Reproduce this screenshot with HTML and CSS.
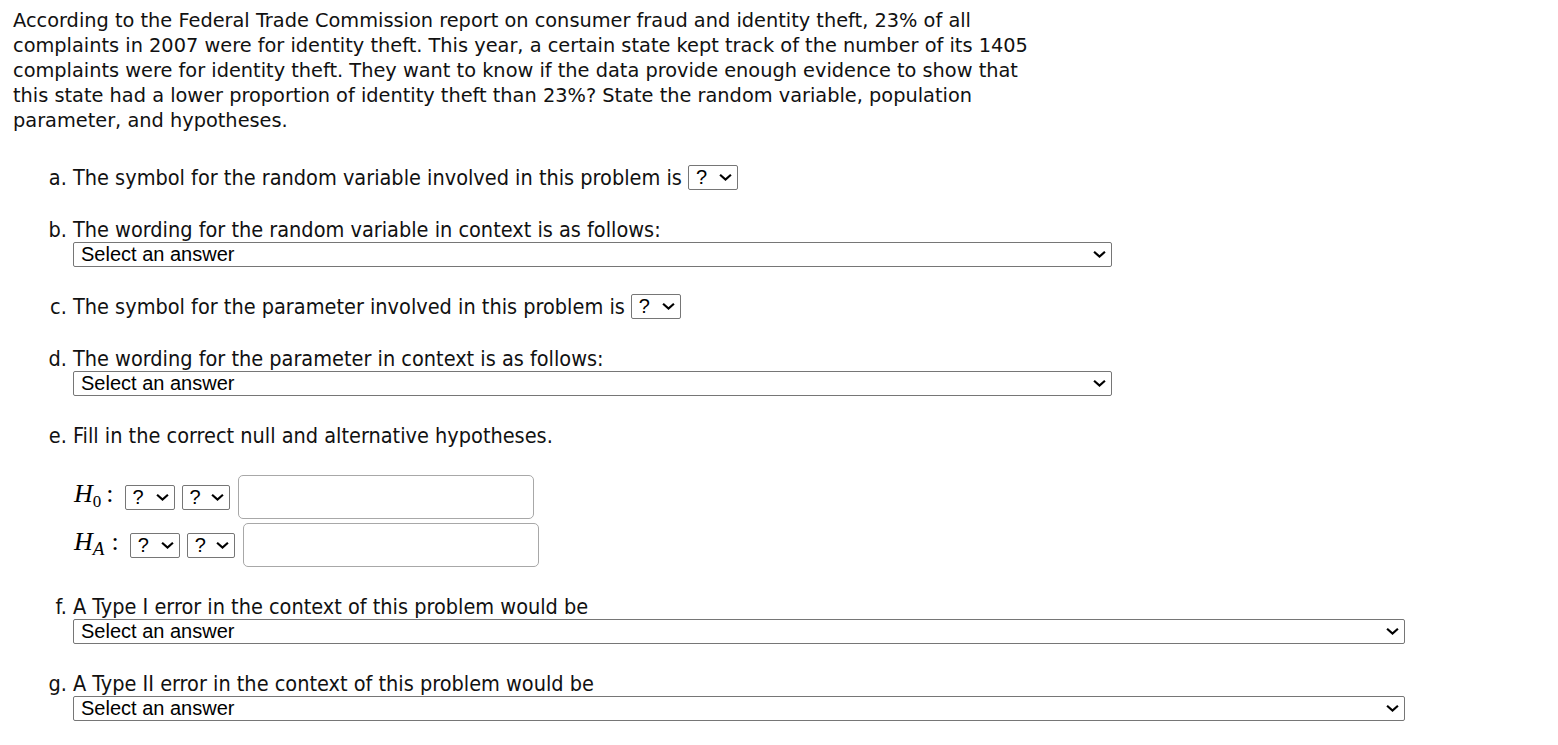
FILE: index.html
```html
<!DOCTYPE html>
<html lang="en">
<head>
    <meta charset="UTF-8">
    <title>Hypothesis Question</title>
    <link rel="stylesheet" href="styles.css">
</head>
<body>
    <p class="question">According to the Federal Trade Commission report on consumer fraud and identity theft, 23% of all complaints in 2007 were for identity theft. This year, a certain state kept track of the number of its 1405 complaints were for identity theft. They want to know if the data provide enough evidence to show that this state had a lower proportion of identity theft than 23%? State the random variable, population parameter, and hypotheses.</p>

    <ol class="parts">
        <li class="part">
            <span class="mark">a.</span>
            <div class="body inline-row"><span>The symbol for the random variable involved in this problem is</span><span class="pick-wrap"><select class="pick pick-q"><option>?</option></select><svg class="chev" viewBox="0 0 12 8"><path d="M1 1.5 L6 6 L11 1.5"/></svg></span></div>
        </li>
        <li class="part">
            <span class="mark">b.</span>
            <div class="body">
                <div class="line">The wording for the random variable in context is as follows:</div>
                <span class="pick-wrap"><select class="pick pick-mid"><option>Select an answer</option></select><svg class="chev" viewBox="0 0 12 8"><path d="M1 1.5 L6 6 L11 1.5"/></svg></span>
            </div>
        </li>
        <li class="part">
            <span class="mark">c.</span>
            <div class="body inline-row"><span>The symbol for the parameter involved in this problem is</span><span class="pick-wrap"><select class="pick pick-q"><option>?</option></select><svg class="chev" viewBox="0 0 12 8"><path d="M1 1.5 L6 6 L11 1.5"/></svg></span></div>
        </li>
        <li class="part">
            <span class="mark">d.</span>
            <div class="body">
                <div class="line">The wording for the parameter in context is as follows:</div>
                <span class="pick-wrap"><select class="pick pick-mid"><option>Select an answer</option></select><svg class="chev" viewBox="0 0 12 8"><path d="M1 1.5 L6 6 L11 1.5"/></svg></span>
            </div>
        </li>
        <li class="part">
            <span class="mark">e.</span>
            <div class="body">
                <div class="line">Fill in the correct null and alternative hypotheses.</div>
                <div class="hyp">
                    <div class="hyp-row">
                        <span class="hlabel"><i>H</i><sub>0</sub><span class="colon">:</span></span>
                        <span class="pick-wrap"><select class="pick pick-q"><option>?</option></select><svg class="chev" viewBox="0 0 12 8"><path d="M1 1.5 L6 6 L11 1.5"/></svg></span>
                        <span class="pick-wrap"><select class="pick pick-q2"><option>?</option></select><svg class="chev" viewBox="0 0 12 8"><path d="M1 1.5 L6 6 L11 1.5"/></svg></span>
                        <input class="hval" type="text">
                    </div>
                    <div class="hyp-row">
                        <span class="hlabel"><i>H</i><sub class="sub-a"><i>A</i></sub><span class="colon">:</span></span>
                        <span class="pick-wrap"><select class="pick pick-q"><option>?</option></select><svg class="chev" viewBox="0 0 12 8"><path d="M1 1.5 L6 6 L11 1.5"/></svg></span>
                        <span class="pick-wrap"><select class="pick pick-q2"><option>?</option></select><svg class="chev" viewBox="0 0 12 8"><path d="M1 1.5 L6 6 L11 1.5"/></svg></span>
                        <input class="hval" type="text">
                    </div>
                </div>
            </div>
        </li>
        <li class="part">
            <span class="mark">f.</span>
            <div class="body">
                <div class="line">A Type I error in the context of this problem would be</div>
                <span class="pick-wrap"><select class="pick pick-wide"><option>Select an answer</option></select><svg class="chev" viewBox="0 0 12 8"><path d="M1 1.5 L6 6 L11 1.5"/></svg></span>
            </div>
        </li>
        <li class="part">
            <span class="mark">g.</span>
            <div class="body">
                <div class="line">A Type II error in the context of this problem would be</div>
                <span class="pick-wrap"><select class="pick pick-wide"><option>Select an answer</option></select><svg class="chev" viewBox="0 0 12 8"><path d="M1 1.5 L6 6 L11 1.5"/></svg></span>
            </div>
        </li>
    </ol>
</body>
</html>
```

FILE: styles.css
```css
body {
    margin: 8px 12px;
    color: #111;
    background: #fff;
}
.question {
    margin: 0 0 32px 1px;
    width: 1030px;
    font-family: "DejaVu Sans", sans-serif;
    font-size: 19.35px;
    line-height: 25px;
}
.parts {
    list-style: none;
    margin: 0;
    padding: 0;
    font-family: "DejaVu Sans Condensed", "DejaVu Sans", sans-serif;
    font-size: 21.5px;
    line-height: 25px;
}
.part {
    display: flex;
    margin-bottom: 27px;
}
.mark {
    width: 61px;
    text-align: right;
    flex-shrink: 0;
}
.mark::after {
    content: "\00a0";
}
.body {
    flex: 1;
}
.inline-row {
    display: flex;
    align-items: center;
    gap: 6px;
}
.line {
    height: 25px;
    line-height: 25px;
}
.pick-wrap {
    position: relative;
    display: flex;
    width: fit-content;
}
.pick {
    appearance: none;
    -webkit-appearance: none;
    font-family: "Liberation Sans", Arial, sans-serif;
    font-size: 20px;
    line-height: 23px;
    height: 25px;
    box-sizing: border-box;
    border: 1px solid #767676;
    border-radius: 2px;
    background: #fff;
    color: #000;
    padding: 0 0 0 7px;
    margin: 0;
}
.chev {
    position: absolute;
    right: 6px;
    top: 8px;
    width: 13px;
    height: 9px;
    pointer-events: none;
}
.chev path {
    fill: none;
    stroke: #000;
    stroke-width: 2;
}
.pick-q {
    width: 50px;
}
.pick-q2 {
    width: 48px;
}
.pick-mid {
    width: 1039px;
}
.pick-wide {
    width: 1332px;
}
.hyp {
    margin-top: 27px;
    display: flex;
    flex-direction: column;
    gap: 4px;
}
.hyp-row {
    display: flex;
    align-items: center;
    gap: 7px;
}
.hlabel {
    font-family: "Liberation Serif", "Times New Roman", serif;
    font-size: 26px;
    line-height: 25px;
    margin-left: 1px;
    margin-right: 4px;
    color: #000;
}
.hlabel sub {
    font-size: 17px;
    vertical-align: -5px;
}
.hlabel .sub-a {
    font-size: 19px;
    margin-right: 2px;
}
.colon {
    margin-left: 5px;
}
.hval {
    width: 296px;
    height: 44px;
    box-sizing: border-box;
    border: 1px solid #a8a8a8;
    border-radius: 5px;
    margin-left: 1px;
}
```
